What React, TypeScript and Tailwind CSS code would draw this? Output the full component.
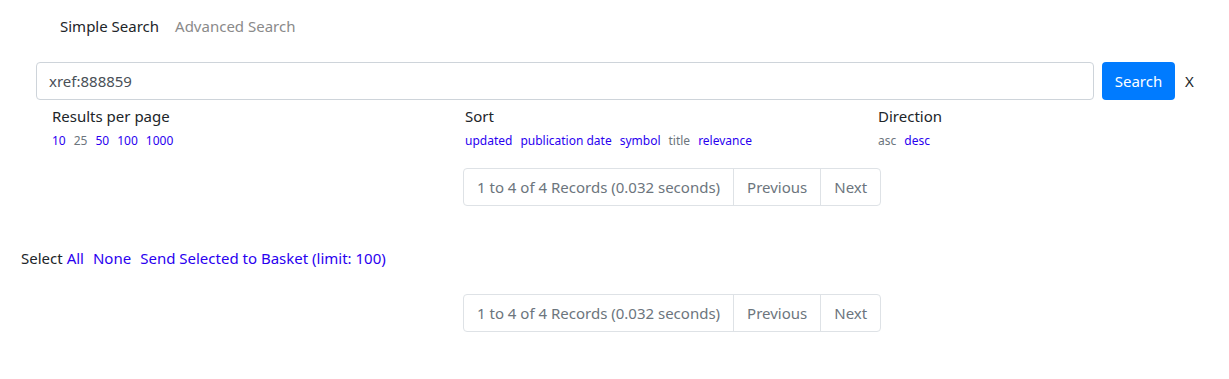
import React from 'react';

const blue = 'text-[#2a00f0]';
const gray = 'text-[#6c757d]';

function Pager() {
  return (
    <div className="ml-[463px] flex w-fit rounded border border-[#dee2e6] text-[15px] text-[#6c757d]">
      <span className="px-[13px] py-[6px] leading-6">1 to 4 of 4 Records (0.032 seconds)</span>
      <span className="border-l border-[#dee2e6] px-[13px] py-[6px] leading-6">Previous</span>
      <span className="border-l border-[#dee2e6] px-[13px] py-[6px] leading-6">Next</span>
    </div>
  );
}

export default function App() {
  const perPage = [
    { t: '10', c: blue },
    { t: '25', c: gray },
    { t: '50', c: blue },
    { t: '100', c: blue },
    { t: '1000', c: blue },
  ];
  const sorts = [
    { t: 'updated', c: blue },
    { t: 'publication date', c: blue },
    { t: 'symbol', c: blue },
    { t: 'title', c: gray },
    { t: 'relevance', c: blue },
  ];

  return (
    <div className="min-h-screen overflow-hidden bg-white text-[#212529] font-['Segoe_UI','Noto_Sans',sans-serif]">
      <div className="flex pl-[52px] pt-[14px] text-[15px] leading-6">
        <span className="px-2 text-[#212529]">Simple Search</span>
        <span className="px-2 text-[#8a8a8a]">Advanced Search</span>
      </div>

      <div className="mt-6 flex items-center pl-[36px]">
        <div className="flex h-[38px] w-[1058px] items-center rounded border border-[#ced4da] px-3 text-[15px] text-[#495057]">
          xref:888859
        </div>
        <button className="ml-2 h-[38px] w-[73px] rounded bg-[#007bff] text-[15px] text-white">Search</button>
        <span className="ml-[10px] text-[15px] text-[#212529]">X</span>
      </div>

      <div className="mt-[4px] grid grid-cols-[413px_413px_1fr] pl-[52px]">
        <div>
          <div className="text-[15px] leading-6">Results per page</div>
          <div className="mt-[3px] flex gap-[8px] text-[12px] leading-[19px]">
            {perPage.map(p => <span key={p.t} className={p.c}>{p.t}</span>)}
          </div>
        </div>
        <div>
          <div className="text-[15px] leading-6">Sort</div>
          <div className="mt-[3px] flex gap-[8px] text-[12px] leading-[19px]">
            {sorts.map(p => <span key={p.t} className={p.c}>{p.t}</span>)}
          </div>
        </div>
        <div>
          <div className="text-[15px] leading-6">Direction</div>
          <div className="mt-[3px] flex gap-[8px] text-[12px] leading-[19px]">
            <span className={gray}>asc</span>
            <span className={blue}>desc</span>
          </div>
        </div>
      </div>

      <div className="mt-[18px]">
        <Pager />
      </div>

      <div className="mt-[40px] flex pl-[21px] text-[15px] leading-6">
        <span>Select</span>
        <span className={`ml-[4px] ${blue}`}>All</span>
        <span className={`ml-[9px] ${blue}`}>None</span>
        <span className={`ml-[9px] ${blue}`}>Send Selected to Basket (limit: 100)</span>
      </div>

      <div className="mt-[24px]">
        <Pager />
      </div>
    </div>
  );
}
